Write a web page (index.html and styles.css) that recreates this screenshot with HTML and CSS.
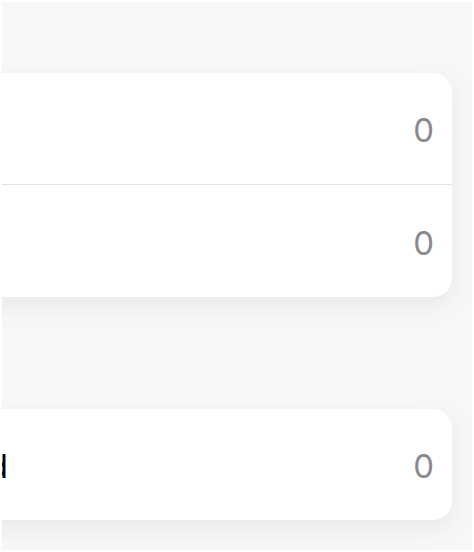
FILE: index.html
```html
<!DOCTYPE html>
<html lang="en">
<head>
<meta charset="utf-8">
<title>Stats</title>
<link rel="stylesheet" href="styles.css">
</head>
<body>
<div class="screen">
  <div class="groups">
    <section class="card">
      <div class="row"><span class="label">Sent</span><span class="value">0</span></div>
      <div class="divider"></div>
      <div class="row row-tall"><span class="label">Seen</span><span class="value">0</span></div>
    </section>
    <section class="card">
      <div class="row"><span class="label">Blocked</span><span class="value">0</span></div>
    </section>
  </div>
</div>
</body>
</html>
```
FILE: styles.css
```css
html, body {
  margin: 0;
  padding: 0;
  background: #ffffff;
}
body {
  font-family: Inter, "Liberation Sans", sans-serif;
}
.screen {
  margin: 2px;
  height: 548px;
  background: #f7f7f8;
  overflow: hidden;
}
.groups {
  display: flex;
  flex-direction: column;
  gap: 112px;
  padding-top: 71px;
  margin-left: -139px;
  width: 589px;
}
.card {
  background: #ffffff;
  border-radius: 19px;
  box-shadow: 0 8px 22px rgba(40, 40, 60, 0.07);
  overflow: hidden;
}
.row {
  display: flex;
  align-items: center;
  justify-content: space-between;
  box-sizing: border-box;
  height: 111px;
  padding: 3px 18px 0 20px;
}
.row-tall {
  height: 112px;
}
.divider {
  height: 1px;
  background: #e2e2e4;
}
.label {
  font-size: 33px;
  color: #000000;
}
.value {
  font-size: 33px;
  color: #8a8a8e;
}
```
